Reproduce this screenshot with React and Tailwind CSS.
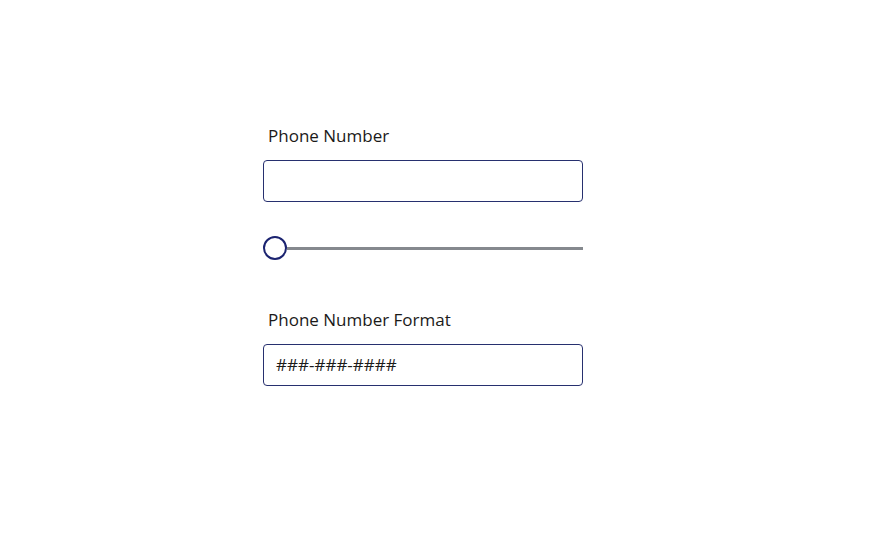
export default function App() {
  return (
    <div className="min-h-[550px] w-[889px] bg-white" style={{ fontFamily: '"Open Sans", "Noto Sans", sans-serif' }}>
      <div className="pl-[263px] pt-[124px] w-[583px]">
        {/* phone number field */}
        <label className="block pl-[5px] text-[17px] leading-[24px] text-[#1b1a19]">Phone Number</label>
        <div className="mt-[12px] h-[42px] w-[320px] rounded-[4px] border border-[#27306f] bg-white"></div>

        {/* slider */}
        <div className="mt-[34px] flex h-[24px] w-[320px] items-center">
          <div className="h-[24px] w-[24px] shrink-0 rounded-full border-2 border-[#1b2370] bg-white"></div>
          <div className="h-[3px] flex-1 bg-[#85898e]"></div>
        </div>

        {/* format field */}
        <label className="mt-[48px] block pl-[5px] text-[17px] leading-[24px] text-[#1b1a19]">Phone Number Format</label>
        <div className="mt-[12px] flex h-[42px] w-[320px] items-center rounded-[4px] border border-[#27306f] bg-white pl-[12px] text-[17px] text-[#1b1a19]">
          ###-###-####
        </div>
      </div>
    </div>
  );
}
